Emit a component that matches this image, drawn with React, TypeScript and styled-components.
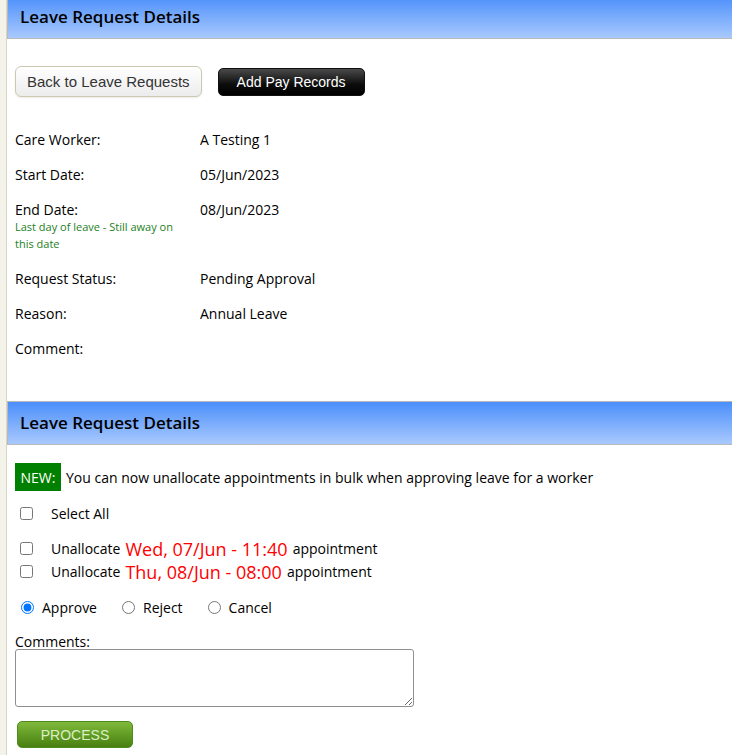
import { useState } from 'react'
import styled, { createGlobalStyle } from 'styled-components'

const GlobalStyle = createGlobalStyle`
  html, body {
    margin: 0;
    padding: 0;
    background: #f4f3ea;
    overflow: hidden;
  }
  body {
    font-family: 'Open Sans', 'Liberation Sans', Arial, sans-serif;
    font-size: 14px;
    color: #000;
  }
`

const Page = styled.div`
  margin-left: 6px;
  margin-top: -5px;
  border-left: 1px solid #d9d6c6;
  background: #fff;
  min-height: 770px;
`

const SectionHeader = styled.div`
  height: 40px;
  display: flex;
  align-items: center;
  padding-left: 12px;
  padding-bottom: 2px;
  border: 1px solid #b9b9b9;
  border-right: none;
  background: linear-gradient(to bottom, #4b8ffb 0%, #a9c9fd 100%);
  font-size: 17px;
  font-weight: 600;
  color: #000;
`

const Body = styled.div`
  padding: 0 8px;
`

const ButtonRow = styled.div`
  display: flex;
  align-items: center;
  gap: 16px;
  padding-top: 27px;
`

const LightButton = styled.button`
  height: 31px;
  padding: 0 11px;
  font-family: 'Liberation Sans', Arial, sans-serif;
  font-size: 15px;
  color: #333;
  border: 1px solid #cdc9ae;
  border-radius: 6px;
  background: linear-gradient(to bottom, #ffffff 0%, #ececec 100%);
  box-shadow: 0 1px 2px rgba(0, 0, 0, 0.08);
`

const DarkButton = styled.button`
  height: 28px;
  padding: 0 18px;
  font-family: 'Liberation Sans', Arial, sans-serif;
  font-size: 14px;
  color: #fff;
  border: 1px solid #111;
  border-radius: 5px;
  background: linear-gradient(to bottom, #4a4a4a 0%, #0c0c0c 60%, #000 100%);
`

const DetailsTable = styled.div`
  display: grid;
  grid-template-columns: 185px 1fr;
  padding-top: 25px;
  padding-bottom: 35px;
`

const Cell = styled.div`
  padding: 9px 0;
  line-height: 17px;
`

const Note = styled.div`
  width: 172px;
  font-size: 11px;
  line-height: 17px;
  color: #1d7f1d;
`

const NoticeRow = styled.div`
  display: flex;
  align-items: center;
  gap: 5px;
  padding-top: 18px;
`

const NewBadge = styled.span`
  display: inline-flex;
  align-items: center;
  justify-content: center;
  width: 46px;
  height: 28px;
  background: #008000;
  color: #fff;
  font-size: 14px;
`

const CheckRow = styled.label<{ $top?: number }>`
  display: flex;
  align-items: center;
  height: 23px;
  margin-top: ${({ $top }) => $top ?? 0}px;
  padding-left: 1px;

  input {
    margin: 0 18px 0 4px;
    width: 13px;
    height: 13px;
  }
`

const DateText = styled.span`
  color: #f00;
  font-size: 18px;
  margin: 0 5px;
`

const RadioGroup = styled.div`
  display: flex;
  align-items: center;
  margin-top: 13px;
  height: 23px;
`

const RadioLabel = styled.label`
  display: flex;
  align-items: center;
  margin-right: 19px;

  input {
    margin: 0 8px 0 6px;
    width: 13px;
    height: 13px;
  }
`

const FieldLabel = styled.div`
  margin-top: 14px;
  line-height: 17px;
`

const CommentBox = styled.textarea`
  display: block;
  box-sizing: border-box;
  width: 399px;
  height: 58px;
  margin-top: -1px;
  border: 1px solid #8f8f8f;
  border-radius: 3px;
  resize: both;
  font-family: 'Liberation Sans', Arial, sans-serif;
`

const ProcessButton = styled.button`
  display: block;
  margin: 14px 0 0 2px;
  width: 116px;
  height: 27px;
  font-family: 'Liberation Sans', Arial, sans-serif;
  font-size: 14px;
  color: #dcefc4;
  border: 1px solid #4f8a1c;
  border-radius: 5px;
  background: linear-gradient(to bottom, #80b93a 0%, #5f9a22 55%, #4a8013 100%);
`

const appointments = ['Wed, 07/Jun - 11:40', 'Thu, 08/Jun - 08:00']

const decisions = [
  { value: 'approve', label: 'Approve' },
  { value: 'reject', label: 'Reject' },
  { value: 'cancel', label: 'Cancel' },
]

export default function App() {
  const [decision, setDecision] = useState('approve')

  return (
    <Page>
      <GlobalStyle />
      <SectionHeader>Leave Request Details</SectionHeader>
      <Body>
        <ButtonRow>
          <LightButton>Back to Leave Requests</LightButton>
          <DarkButton>Add Pay Records</DarkButton>
        </ButtonRow>
        <DetailsTable>
          <Cell>Care Worker:</Cell>
          <Cell>A Testing 1</Cell>
          <Cell>Start Date:</Cell>
          <Cell>05/Jun/2023</Cell>
          <Cell>
            End Date:
            <Note>Last day of leave - Still away on this date</Note>
          </Cell>
          <Cell>08/Jun/2023</Cell>
          <Cell>Request Status:</Cell>
          <Cell>Pending Approval</Cell>
          <Cell>Reason:</Cell>
          <Cell>Annual Leave</Cell>
          <Cell>Comment:</Cell>
          <Cell></Cell>
        </DetailsTable>
      </Body>
      <SectionHeader>Leave Request Details</SectionHeader>
      <Body>
        <NoticeRow>
          <NewBadge>NEW:</NewBadge>
          You can now unallocate appointments in bulk when approving leave for a worker
        </NoticeRow>
        <CheckRow $top={11}>
          <input type="checkbox" />
          Select All
        </CheckRow>
        {appointments.map((a, index) => (
          <CheckRow key={a} $top={index === 0 ? 12 : 0}>
            <input type="checkbox" />
            Unallocate<DateText>{a}</DateText>appointment
          </CheckRow>
        ))}
        <RadioGroup>
          {decisions.map((d) => (
            <RadioLabel key={d.value}>
              <input
                type="radio"
                name="decision"
                checked={decision === d.value}
                onChange={() => setDecision(d.value)}
              />
              {d.label}
            </RadioLabel>
          ))}
        </RadioGroup>
        <FieldLabel>Comments:</FieldLabel>
        <CommentBox />
        <ProcessButton>PROCESS</ProcessButton>
      </Body>
    </Page>
  )
}
